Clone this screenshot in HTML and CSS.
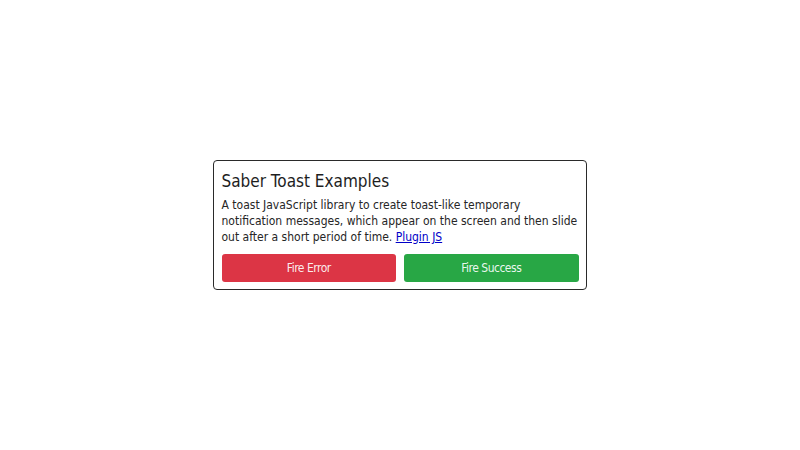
FILE: index.html
```html
<!DOCTYPE html>
<html lang="en">
<head>
<meta charset="utf-8">
<title>Saber Toast Examples</title>
<link rel="stylesheet" href="styles.css">
</head>
<body>
<main class="page">
  <section class="card">
    <h1 class="card-title">Saber Toast Examples</h1>
    <p class="card-text">A toast JavaScript library to create toast-like temporary notification messages, which appear on the screen and then slide out after a short period of time. <a href="#" class="card-link">Plugin JS</a></p>
    <div class="actions">
      <button class="btn btn-error" type="button">Fire Error</button>
      <button class="btn btn-success" type="button">Fire Success</button>
    </div>
  </section>
</main>
</body>
</html>
```
FILE: styles.css
```css
html, body {
  margin: 0;
  padding: 0;
  background: #ffffff;
}
body {
  font-family: "DejaVu Sans Condensed", "DejaVu Sans", sans-serif;
  font-stretch: condensed;
  color: #212529;
}
.page {
  width: 800px;
  height: 450px;
  display: flex;
  align-items: center;
  justify-content: center;
}
.card {
  box-sizing: border-box;
  width: 374px;
  border: 1.5px solid #2a2a2a;
  border-radius: 4px;
  padding: 8px 7.5px 7.5px;
}
.card-title {
  margin: 0 0 4px;
  font-size: 17px;
  line-height: 24px;
  font-weight: 400;
  color: #1e1e1e;
}
.card-text {
  margin: 0 0 9px;
  font-size: 12px;
  line-height: 16px;
  color: #262626;
}
.card-link {
  color: #0000c8;
  text-decoration: underline;
}
.actions {
  display: grid;
  grid-template-columns: 1fr 1fr;
  gap: 8px;
}
.btn {
  height: 28px;
  border: none;
  border-radius: 3px;
  color: rgba(255, 255, 255, 0.92);
  font-family: inherit;
  font-stretch: condensed;
  font-size: 12px;
  letter-spacing: -0.5px;
  cursor: pointer;
}
.btn-error {
  background: #dc3545;
}
.btn-success {
  background: #28a745;
}
```
